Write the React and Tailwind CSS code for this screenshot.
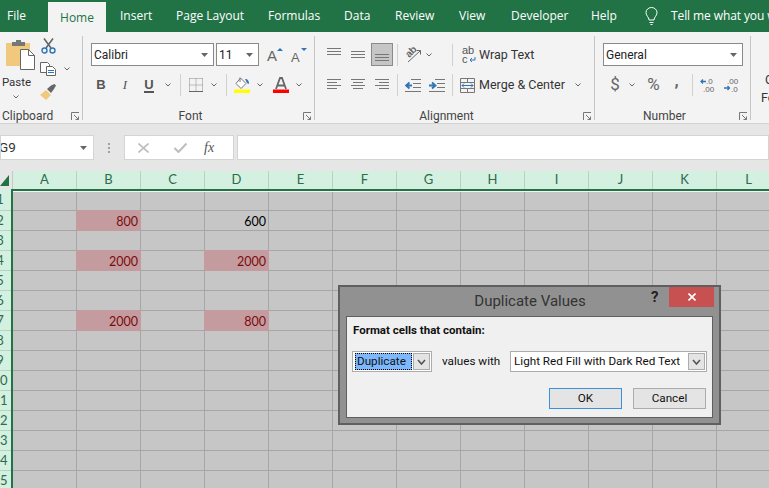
import React from "react";

const COLS = ["A", "B", "C", "D", "E", "F", "G", "H", "I", "J", "K", "L"];
const ROWS = Array.from({ length: 15 }, (_, i) => i + 1);
const TABS = [
  { label: "Insert", cls: "w-[56px]" },
  { label: "Page Layout", cls: "w-[92px]" },
  { label: "Formulas", cls: "w-[76px]" },
  { label: "Data", cls: "w-[51px]" },
  { label: "Review", cls: "w-[64px]" },
  { label: "View", cls: "w-[52px]" },
  { label: "Developer", cls: "w-[80px]" },
  { label: "Help", cls: "w-[54px]" },
];
// red cells, keyed by column + row
const CELLS = {
  B2: { text: "800", dup: true },
  D2: { text: "600" },
  B4: { text: "2000", dup: true },
  D4: { text: "2000", dup: true },
  B7: { text: "2000", dup: true },
  D7: { text: "800", dup: true },
};

const Chev = ({ className = "" }) => (
  <svg className={`h-[4px] w-[6px] shrink-0 ${className}`} viewBox="0 0 6 4" fill="none" stroke="#666" strokeWidth="1">
    <path d="M0.5 0.5 3 3 5.5 0.5" />
  </svg>
);

const Sep = ({ className = "" }) => <div className={`h-[22px] w-px shrink-0 bg-[#d0d0d0] ${className}`} />;

const GroupSep = () => <div className="mt-[4px] h-[84px] w-px shrink-0 bg-[#c6c6c6]" />;

const Launcher = ({ className = "" }) => (
  <svg className={`absolute top-[4px] h-[9px] w-[9px] ${className}`} viewBox="0 0 9 9" fill="none" stroke="#777" strokeWidth="1">
    <path d="M0.5 8V0.5H8 M3 3 7.5 7.5 M7.5 4.5V7.5H4.5" />
  </svg>
);

const GroupLabel = ({ children, launcher }) => (
  <div className="relative mt-auto flex h-[16px] items-center justify-center pr-[16px] text-[12px] leading-none text-[#444]">
    {children}
    <Launcher className={launcher} />
  </div>
);

const ComboArrow = ({ className = "" }) => (
  <svg className={`h-[4px] w-[7px] shrink-0 ${className}`} viewBox="0 0 7 4" fill="#666">
    <path d="M0 0h7L3.5 4z" />
  </svg>
);

const Lines = ({ rows, className = "" }) => (
  <svg className={`h-[12px] w-[14px] shrink-0 ${className}`} viewBox="0 0 14 12" stroke="#777" strokeWidth="1" fill="none">
    {rows.map(([x1, x2, y]) => (
      <path key={y} d={`M${x1} ${y + 0.5}H${x2}`} />
    ))}
  </svg>
);

const Indent = ({ flip, className = "" }) => (
  <svg className={`h-[13px] w-[16px] shrink-0 ${className}`} viewBox="0 0 16 13" fill="none">
    <path d="M6 0.5H16 M8 4.5H16 M8 8.5H16 M0 12.5H16" stroke="#777" />
    {flip ? (
      <path d="M0 6.5H5 M3 3.5 6.5 6.5 3 9.5" stroke="#2f75b5" strokeWidth="1.8" />
    ) : (
      <path d="M2 6.5H7 M4.5 3.5 1 6.5 4.5 9.5" stroke="#2f75b5" strokeWidth="1.8" />
    )}
  </svg>
);

const Clipboard = () => (
  <div className="flex h-[92px] w-[82px] shrink-0 flex-col">
    <div className="flex">
      <div className="flex w-[38px] shrink-0 flex-col items-center pt-[8px]">
        <svg className="ml-[3px] h-[30px] w-[29px]" viewBox="0 0 29 30">
          <path d="M0 3h24v23H0z" fill="#f0c97f" />
          <path d="M6 2h4V0h5v2h4v4H6z" fill="#777" />
          <path d="M14.5 9.5h8l6 6v14h-14z" fill="#fff" stroke="#666" />
          <path d="M22.5 9.5v6h6" fill="none" stroke="#666" />
        </svg>
        <div className="mt-[3px] ml-[-5px] text-[11.5px] leading-[18px] text-[#333]">Paste</div>
        <Chev className="mt-[4px] ml-[-6px]" />
      </div>
      <div className="flex flex-col pt-[6px]">
        <svg className="ml-[3px] h-[16px] w-[15px]" viewBox="0 0 15 16" fill="none">
          <path d="M3 0.5 10 10 M12 0.5 5 10" stroke="#666" strokeWidth="1.6" />
          <circle cx="3.5" cy="12.5" r="2.5" stroke="#2f75b5" strokeWidth="1.4" />
          <circle cx="11.5" cy="12.5" r="2.5" stroke="#2f75b5" strokeWidth="1.4" />
        </svg>
        <div className="mt-[8px] flex items-center">
          <svg className="ml-[2px] h-[14px] w-[16px]" viewBox="0 0 16 14" fill="#fff" stroke="#666">
            <path d="M0.5 0.5h7l2 2v8h-9z" />
            <path d="M6.5 4.5h6l3 3v6h-9z" />
            <path d="M8 8.5h6 M8 10.5h6" stroke="#2f75b5" />
          </svg>
          <Chev className="ml-[8px]" />
        </div>
        <svg className="mt-[8px] ml-[2px] h-[16px] w-[16px]" viewBox="0 0 16 16">
          <path d="M0 11 6 6l5 5-5 5z" fill="#f0c97f" />
          <path d="M7 5 11 1.5 14.5 0 16 1.5 14 5 11 9z" fill="#666" />
        </svg>
      </div>
    </div>
    <div className="relative mt-auto h-[16px] pl-[2px] text-[12px] leading-[16px] text-[#444]">
      Clipboard
      <Launcher className="left-[71px]" />
    </div>
  </div>
);

const Combo = ({ children, className = "" }) => (
  <div className={`flex h-[23px] shrink-0 items-center justify-between border border-[#8a8a8a] bg-white pt-[1px] pr-[5px] pl-[2px] text-[12px] text-[#222] ${className}`}>
    {children}
    <ComboArrow />
  </div>
);

const Font = () => (
  <div className="flex h-[92px] w-[231px] shrink-0 flex-col pt-[11px]">
    <div className="flex items-center">
      <Combo className="ml-[8px] w-[123px]">Calibri</Combo>
      <Combo className="ml-[2px] w-[43px]">11</Combo>
      <div className="relative ml-[8px] h-[18px] w-[14px] pt-[2px] text-[15px] leading-[16px] text-[#666]">
        <span className="font-['Liberation_Sans',sans-serif]">A</span>
        <svg className="absolute top-[2px] right-[-2px] h-[3px] w-[6px]" viewBox="0 0 6 3" fill="#2f75b5"><path d="M3 0l3 3H0z" /></svg>
      </div>
      <div className="relative ml-[10px] h-[18px] w-[14px] pt-[4px] text-[13px] leading-[15px] text-[#666]">
        <span className="font-['Liberation_Sans',sans-serif]">A</span>
        <svg className="absolute top-[2px] right-[-2px] h-[3px] w-[6px]" viewBox="0 0 6 3" fill="#2f75b5"><path d="M0 0h6L3 3z" /></svg>
      </div>
    </div>
    <div className="mt-[7px] flex h-[24px] items-center font-['Liberation_Sans',sans-serif] text-[13px] text-[#555]">
      <span className="ml-[13px] w-[10px] text-center font-bold">B</span>
      <span className="ml-[14px] w-[10px] text-center font-['Liberation_Serif',serif] italic">I</span>
      <span className="ml-[14px] w-[10px] border-b-2 border-[#555] text-center leading-[13px] font-bold">U</span>
      <Chev className="ml-[11px]" />
      <Sep className="ml-[9px]" />
      <svg className="ml-[8px] h-[14px] w-[14px] shrink-0" viewBox="0 0 14 14" fill="none">
        <path d="M0.5 0.5H14 M0.5 0.5V14 M13.5 0.5V14 M7 0.5V14 M0.5 7H14" stroke="#888" strokeDasharray="1 1" />
        <path d="M0 13.5H14" stroke="#666" />
      </svg>
      <Chev className="ml-[8px]" />
      <Sep className="ml-[9px]" />
      <svg className="ml-[7px] h-[16px] w-[16px] shrink-0" viewBox="0 0 16 16" fill="none">
        <path d="M6.5 1 12 6.5 7 11.5 2 6.5z" stroke="#777" fill="#fff" />
        <path d="M6 0.5V5" stroke="#777" />
        <path d="M11 2c3 0 4 2 4 5l-2-1z" fill="#2f75b5" />
        <path d="M0 12.5h16V16H0z" fill="#ffff00" />
      </svg>
      <Chev className="ml-[7px]" />
      <svg className="ml-[10px] h-[16px] w-[16px] shrink-0" viewBox="0 0 16 16">
        <path d="M3 12 7 1h2l4 11 M4.5 8.5h7" fill="none" stroke="#666" strokeWidth="1.8" />
        <path d="M0 12.5h16V16H0z" fill="#ff0000" />
      </svg>
      <Chev className="ml-[7px]" />
    </div>
    <GroupLabel launcher="left-[220px]">Font</GroupLabel>
  </div>
);

const Alignment = () => (
  <div className="flex h-[92px] w-[279px] shrink-0 flex-col pt-[11px]">
    <div className="flex h-[23px] items-center">
      <Lines className="mt-[-7px] ml-[12px]" rows={[[0, 14, 3], [0, 14, 6], [0, 14, 9]]} />
      <Lines className="mt-[1px] ml-[10px]" rows={[[0, 14, 2], [0, 14, 5], [0, 14, 8]]} />
      <div className="ml-[6px] flex h-[23px] w-[22px] shrink-0 items-end justify-center border border-[#8a8a8a] bg-[#c6c6c6] pb-[2px]">
        <Lines rows={[[0, 14, 3], [0, 14, 6], [0, 14, 9]]} />
      </div>
      <Sep className="ml-[4px]" />
      <div className="relative ml-[7px] h-[16px] w-[17px] shrink-0">
        <span className="absolute top-[-3px] left-[0px] -rotate-45 font-['Liberation_Sans',sans-serif] text-[10px] font-bold text-[#666]">ab</span>
        <svg className="absolute inset-0 h-[16px] w-[17px]" viewBox="0 0 17 16" fill="none" stroke="#666">
          <path d="M3 15 15 4 M11.5 3.5H15.5V7.5" />
        </svg>
      </div>
      <Chev className="ml-[4px]" />
      <Sep className="ml-[20px]" />
      <div className="relative ml-[9px] h-[18px] w-[12px] shrink-0 font-['Liberation_Sans',sans-serif] text-[11px] leading-[9px] text-[#555]">
        ab<br />c
        <svg className="absolute right-[-2px] bottom-[1px] h-[6px] w-[7px]" viewBox="0 0 7 6" fill="none" stroke="#2f75b5"><path d="M6 0V3H1 M3 1 1 3 3 5" /></svg>
      </div>
      <span className="ml-[5px] pt-[2px] text-[12.5px] text-[#333]">Wrap Text</span>
    </div>
    <div className="mt-[7px] flex h-[24px] items-center">
      <Lines className="ml-[12px]" rows={[[0, 14, 0], [0, 10, 3], [0, 14, 6], [0, 10, 9]]} />
      <Lines className="ml-[10px]" rows={[[0, 14, 0], [2, 12, 3], [0, 14, 6], [2, 12, 9]]} />
      <Lines className="ml-[10px]" rows={[[0, 14, 0], [4, 14, 3], [0, 14, 6], [4, 14, 9]]} />
      <Sep className="ml-[8px]" />
      <Indent className="ml-[7px]" />
      <Indent flip className="ml-[8px]" />
      <Sep className="ml-[7px]" />
      <svg className="ml-[7px] h-[15px] w-[15px] shrink-0" viewBox="0 0 15 15" fill="none">
        <path d="M0.5 0.5h14v14H0.5z M0.5 4.5h14 M0.5 10.5h14 M7.5 0.5v4 M7.5 10.5v4" stroke="#777" />
        <path d="M2 7.5h11 M4 5.5 2 7.5 4 9.5 M11 5.5l2 2-2 2" stroke="#2f75b5" />
      </svg>
      <span className="ml-[4px] w-[85px] shrink-0 pt-[1px] text-[12.5px] whitespace-nowrap text-[#333]">Merge &amp; Center</span>
      <Chev className="ml-[11px]" />
    </div>
    <GroupLabel launcher="left-[268px]">Alignment</GroupLabel>
  </div>
);

// small ".0 / .00" decimal icons, the digits stay real text
const Decimal = ({ more, className = "" }) => (
  <svg className={`h-[14px] w-[15px] shrink-0 ${className}`} viewBox="0 0 15 14" fontFamily="Liberation Sans, sans-serif" fontSize="8" fill="#666">
    <text x={more ? 3 : 6} y="6">{more ? ".00" : ".0"}</text>
    <text x={more ? 7 : 3} y="13.5">{more ? ".0" : ".00"}</text>
    {more ? (
      <path d="M0 10h5 M3.5 8l2 2-2 2" stroke="#2f75b5" strokeWidth="1.3" fill="none" />
    ) : (
      <path d="M1 3.5h5 M3 1.5l-2 2 2 2" stroke="#2f75b5" strokeWidth="1.3" fill="none" />
    )}
  </svg>
);

const NumberGroup = () => (
  <div className="flex h-[92px] w-[155px] shrink-0 flex-col pt-[11px]">
    <Combo className="ml-[8px] w-[140px]">General</Combo>
    <div className="mt-[7px] flex h-[24px] items-center text-[#666]">
      <span className="ml-[15px] w-[10px] text-center text-[17px]">$</span>
      <Chev className="ml-[9px]" />
      <span className="ml-[12px] w-[13px] text-center text-[17px]">%</span>
      <span className="mt-[-10px] ml-[14px] w-[5px] text-center text-[17px] leading-[15px] font-bold">,</span>
      <Sep className="ml-[13px]" />
      <Decimal className="ml-[7px]" />
      <Decimal more className="ml-[9px]" />
    </div>
    <GroupLabel launcher="left-[144px]">Number</GroupLabel>
  </div>
);

const Ribbon = () => (
  <div className="flex h-[92px] overflow-hidden border-b border-[#d2d2d2] bg-[#f3f3f3]">
    <Clipboard />
    <GroupSep />
    <Font />
    <GroupSep />
    <Alignment />
    <GroupSep />
    <NumberGroup />
    <GroupSep />
    <div className="w-[18px] shrink-0 overflow-hidden pt-[39px] text-[12.5px] leading-[18px] text-[#333]">
      <div className="ml-[14px]">Conditional</div>
      <div className="ml-[10px]">Formatting</div>
    </div>
  </div>
);

const TabBar = () => (
  <div className="flex h-[32px] items-end overflow-hidden bg-[#217346] font-['Open_Sans',sans-serif] text-[12px] whitespace-nowrap text-white">
    <span className="mb-[7px] ml-[7px] w-[41px] shrink-0">File</span>
    <span className="mr-[14px] flex h-[30px] w-[58px] shrink-0 items-center justify-center bg-[#f3f3f3] pt-[1px] text-[#217346]">Home</span>
    {TABS.map((t) => (
      <span key={t.label} className={`mb-[7px] shrink-0 ${t.cls}`}>{t.label}</span>
    ))}
    <svg className="mb-[7px] h-[18px] w-[13px] shrink-0" viewBox="0 0 13 18" fill="none" stroke="#fff">
      <path d="M4 13C4 10 1 9 1 5.5a5.5 5 0 0 1 11 0C12 9 9 10 9 13z M4.5 15.5h4 M5.5 17.5h2" />
    </svg>
    <span className="mb-[7px] ml-[13px] tracking-[-0.1px]">Tell me what you want to do</span>
  </div>
);

const FormulaBar = () => (
  <div className="flex h-[47px] items-start bg-[#e6e6e6] pt-[11px]">
    <div className="flex h-[25px] w-[94px] shrink-0 items-center justify-between overflow-hidden border border-[#d4d4d4] bg-white pr-[6px] text-[13.5px] text-[#333]">
      <span className="ml-[-2px]">G9</span>
      <ComboArrow />
    </div>
    <div className="ml-[13px] flex h-[25px] w-[3px] shrink-0 flex-col items-center justify-center gap-[2px]">
      <i className="h-[2px] w-[2px] bg-[#a0a0a0]" />
      <i className="h-[2px] w-[2px] bg-[#a0a0a0]" />
      <i className="h-[2px] w-[2px] bg-[#a0a0a0]" />
    </div>
    <div className="ml-[14px] flex h-[25px] w-[110px] shrink-0 items-center border border-[#d4d4d4] bg-white">
      <svg className="ml-[13px] h-[10px] w-[11px]" viewBox="0 0 11 10" fill="none" stroke="#bdbdbd" strokeWidth="1.6"><path d="M0.5 0.5 10.5 9.5 M10.5 0.5 0.5 9.5" /></svg>
      <svg className="ml-[25px] h-[10px] w-[13px]" viewBox="0 0 13 10" fill="none" stroke="#bdbdbd" strokeWidth="2"><path d="M0.5 5 4.5 9 12.5 0.5" /></svg>
      <span className="ml-[17px] font-['Liberation_Serif',serif] text-[14px] text-[#555] italic">fx</span>
    </div>
    <div className="ml-[3px] h-[25px] flex-1 border border-[#d4d4d4] bg-white" />
  </div>
);

const Sheet = () => (
  <div className="font-['Lato',sans-serif]">
    <div className="flex h-[18px] bg-[#e6e6e6]">
      <div className="relative h-[18px] w-[13px] shrink-0 border-r border-[#c8c8c8]">
        <svg className="absolute top-[4px] left-0 h-[11px] w-[9px]" viewBox="0 0 9 11" fill="#217346"><path d="M9 0v11H0z" /></svg>
      </div>
      {COLS.map((c) => (
        <div key={c} className="flex h-[18px] w-[64px] shrink-0 items-center justify-center border-r border-[#b5d5c3] bg-[#d3f0e0] text-[13px] text-[#2c6b4c]">{c}</div>
      ))}
    </div>
    <div className="flex">
      <div className="w-[13px] shrink-0 border-r-2 border-[#217346]">
        {ROWS.map((r) => (
          <div key={r} className={`flex items-center overflow-hidden border-b border-[#b5d5c3] bg-[#d3f0e0] ${r === 1 ? "h-[22px]" : "h-[20px]"}`}>
            <div className="ml-[-20px] w-[40px] shrink-0 text-center text-[13px] leading-none text-[#2c6b4c]">{r}</div>
          </div>
        ))}
      </div>
      <div className="flex-1 overflow-hidden border-t-2 border-[#217346]">
        <div className="border-t border-[#f4f4f4]">
          {ROWS.map((r) => (
            <div key={r} className={`flex ${r === 1 ? "h-[19px]" : "h-[20px]"}`}>
              {COLS.map((c) => {
                const cell = CELLS[c + r];
                if (cell?.dup) {
                  return (
                    <div key={c} className="mt-[-1px] ml-[-1px] flex h-[21px] w-[65px] shrink-0 items-center justify-end bg-[#c49ca0] pt-[4px] pr-[3px] text-[12.5px] text-[#7a0c0c]">
                      {cell.text}
                    </div>
                  );
                }
                return (
                  <div key={c} className="flex w-[64px] shrink-0 items-center justify-end border-r border-b border-[#a6a6a6] bg-[#c6c6c6] pt-[3px] pr-[2px] text-[12.5px] text-black">
                    {cell?.text}
                  </div>
                );
              })}
            </div>
          ))}
        </div>
      </div>
    </div>
  </div>
);

const ComboBtn = ({ className = "" }) => (
  <div className={`flex h-[17px] w-[17px] shrink-0 items-center justify-center border border-[#acacac] bg-[#e4e4e4] ${className}`}>
    <svg className="h-[6px] w-[9px]" viewBox="0 0 9 6" fill="none" stroke="#555" strokeWidth="1.6"><path d="M1 1 4.5 5 8 1" /></svg>
  </div>
);

const Dialog = () => (
  <div className="absolute top-[285px] left-[338px] h-[140px] w-[383px] border-2 border-[#5f5f5f] bg-[#919191]">
    <div className="flex h-[29px] items-start">
      <div className="mt-[3px] ml-[76px] w-[228px] text-center text-[15px] leading-[22px] text-[#333]">Duplicate Values</div>
      <div className="mt-[1px] ml-[7px] text-[15px] leading-[18px] font-bold text-[#222]">?</div>
      <div className="ml-[11px] flex h-[20px] w-[45px] shrink-0 items-center justify-center bg-[#c75050]">
        <svg className="h-[8px] w-[8px]" viewBox="0 0 8 8" fill="none" stroke="#fff" strokeWidth="1.6"><path d="M0.5 0.5 7.5 7.5 M7.5 0.5 0.5 7.5" /></svg>
      </div>
    </div>
    <div className="mx-[6px] h-[102px] border border-[#5f5f5f] bg-[#f0f0f0] pt-[6px] text-[11.7px] text-[#111]">
      <div className="ml-[6px] text-[11.5px] leading-[14px] font-bold">Format cells that contain:</div>
      <div className="mt-[14px] flex items-center">
        <div className="ml-[5px] flex h-[21px] w-[80px] shrink-0 items-center border border-[#acacac] bg-white pl-[2px]">
          <div className="flex h-[17px] w-[57px] items-center border border-dotted border-black bg-[#7cb8fb] pl-[1px] leading-none">Duplicate</div>
          <ComboBtn className="ml-[1px]" />
        </div>
        <span className="ml-[10px] w-[58px] shrink-0 pt-[1px] whitespace-nowrap">values with</span>
        <div className="ml-[10px] flex h-[21px] w-[197px] shrink-0 items-center justify-between border border-[#acacac] bg-white pr-[1px] pl-[3px]">
          <span className="whitespace-nowrap">Light Red Fill with Dark Red Text</span>
          <ComboBtn />
        </div>
      </div>
      <div className="mt-[16px] flex">
        <div className="ml-[202px] flex h-[21px] w-[73px] items-center justify-center border border-[#3e8fdc] bg-[#e4e4e4]">OK</div>
        <div className="ml-[11px] flex h-[21px] w-[73px] items-center justify-center border border-[#acacac] bg-[#e4e4e4]">Cancel</div>
      </div>
    </div>
  </div>
);

export default function App() {
  return (
    <div className="relative h-[488px] w-[769px] overflow-hidden bg-[#c6c6c6] font-['Roboto',sans-serif]">
      <TabBar />
      <Ribbon />
      <FormulaBar />
      <Sheet />
      <Dialog />
    </div>
  );
}
